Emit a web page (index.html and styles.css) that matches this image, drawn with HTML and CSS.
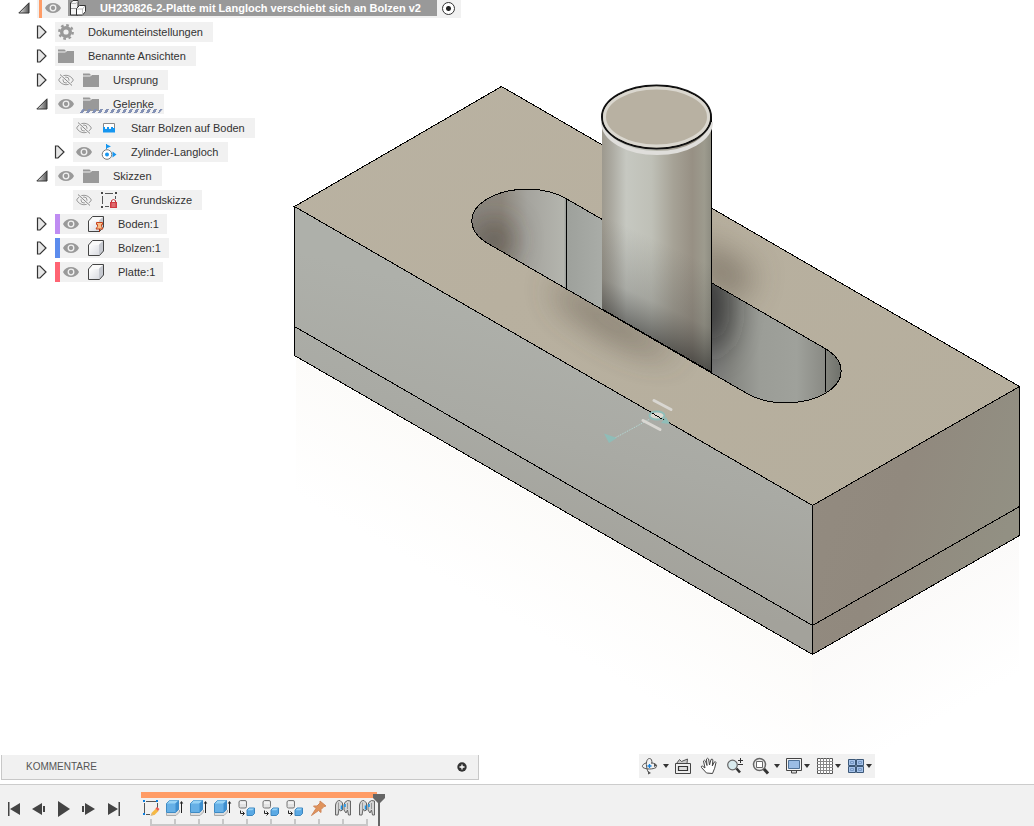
FILE: index.html
```html
<!DOCTYPE html>
<html lang="de">
<head>
    <meta charset="UTF-8">
    <meta name="viewport" content="width=device-width, initial-scale=1.0">
    <title>UH230826-2-Platte mit Langloch verschiebt sich an Bolzen v2</title>
    <link rel="stylesheet" href="styles.css">
</head>
<body>
    <!-- Symbole -->
    <svg class="defs" width="0" height="0">
        <symbol id="open" viewBox="0 0 12 12">
            <path d="M11 .8V11H.8z" fill="url(#tri)" stroke="#333"/>
        </symbol>
        <symbol id="closed" viewBox="0 0 12 14">
            <path d="M1.500 1h2.500L10 7l-6 6H1.500z" fill="#e6e6e6" stroke="#333" stroke-width="1.200"/>
        </symbol>
        <symbol id="eye" viewBox="0 0 16 12">
            <path d="M0 6C3-.8 13-.8 16 6 13 12.800 3 12.800 0 6z" fill="#999"/>
            <circle cx="8" cy="6" r="2.800" fill="#999" stroke="#f1f1f1" stroke-width="1.300"/>
        </symbol>
        <symbol id="eye-off" viewBox="0 0 16 12">
            <path d="M.6 6C4-.3 12-.3 15.400 6 12 12.300 4 12.300.6 6z" fill="none" stroke="#999"/>
            <circle cx="8" cy="6" r="3" fill="none" stroke="#999"/>
            <path d="M2 .5l12 11" stroke="#f1f1f1" stroke-width="2.500"/>
            <path d="M2 .5l12 11" stroke="#888"/>
        </symbol>
        <symbol id="folder" viewBox="0 0 18 14">
            <path d="M1 .5h6.500l1.500 1.500H17v12H1z" fill="#999"/>
            <path d="M1 3h7.500l1.500-1.500" fill="none" stroke="#f1f1f1"/>
        </symbol>
        <symbol id="body" viewBox="0 0 18 18">
            <path d="M1.500 5.500l3.500-4h11.500v11l-4 4h-11z" fill="#fafafa"/>
            <path d="M12 5.500l4.500-4v11l-4.500 4z" fill="#c6c9d0"/>
            <path d="M2 6h10v10H2z" fill="url(#cube)"/>
            <path d="M1.500 6L5.500 1.500h11V12l-4 4.500h-11z" fill="none" stroke="#444" stroke-width="1"/>
        </symbol>
        <symbol id="extrude" viewBox="0 0 18 18">
            <path d="M.5 14v2.500h9.500l3.500-3.500v-2" fill="#ddd" stroke="#aaa"/>
            <path d="M.5 4.500L3.500 1.500h9v9l-3 3h-9z" fill="#66b0e6" stroke="#3f8bc4"/>
            <path d="M1 4.500L3.700 1.500h8.500L9.500 4.500z" fill="#98d3f5"/>
            <path d="M9.500 4.500l3-3v9l-3 3z" fill="#3e8fcf"/>
            <path d="M15.500 14V4" stroke="#222"/>
            <path d="M13.700 4.500L15.500 2l1.800 2.500z" fill="#222"/>
        </symbol>
        <symbol id="component" viewBox="0 0 18 18">
            <path d="M1 3q.5-1.500 1.500-1.500h4.500q1.500 0 1.500 1.500v4.500q0 1.500-1.500 1.500h-4.500Q1 9 1 7.500z" fill="#e3e3e3" stroke="#777"/>
            <path d="M2 4h5.500" stroke="#fff"/>
            <path d="M2.500 11.500v3h3.500M4.500 12.500l2 2-2 2" fill="none" stroke="#222"/>
            <path d="M9 11l2-2h5.500v5.500l-2 2H9z" fill="#5aa9e4" stroke="#3c86bf"/>
            <path d="M9.500 11.200l1.700-1.700h4.800l-1.700 1.700z" fill="#98d3f5"/>
        </symbol>
        <symbol id="joint" viewBox="0 0 18 18">
            <path d="M1.500 16V6Q2.500 1 6 1.500L8.500 4v7l-2 1-1.500-2-1 6z" fill="#d6d6d6" stroke="#666"/>
            <path d="M16.500 16V2l-3-.5Q10 3 10 6v5l2 3 1.500-3 1 5z" fill="#d6d6d6" stroke="#666"/>
            <path d="M4.500 3.500v7M13.500 4v6" stroke="#999"/>
            <path d="M7.500 6.500v4M11 5v3" stroke="#1696f0" stroke-width="1.500"/>
        </symbol>
        <symbol id="caret" viewBox="0 0 6 4"><path d="M0 0h6L3 4z" fill="#333"/></symbol>
        <defs>
            <linearGradient id="tri"><stop stop-color="#eee"/><stop offset="1" stop-color="#555"/></linearGradient>
            <linearGradient id="cube" x2="1" y2="1"><stop stop-color="#fff"/><stop offset="1" stop-color="#d9dbe1"/></linearGradient>
        </defs>
    </svg>

    <main class="workspace">
        <svg class="model" viewBox="0 0 1034 784" role="img" aria-label="Platte mit Langloch und Bolzen">
            <defs>
                <linearGradient id="top" x1="0" y1="0" x2="1" y2="1">
                    <stop stop-color="#b9b2a2"/><stop offset=".4" stop-color="#b8b09f"/><stop offset="1" stop-color="#b5ae9d"/>
                </linearGradient>
                <linearGradient id="front" gradientUnits="userSpaceOnUse" x1="600" y1="330" x2="540" y2="560">
                    <stop stop-color="#aeb0aa"/><stop offset=".5" stop-color="#a9aaa4"/><stop offset="1" stop-color="#a3a29b"/>
                </linearGradient>
                <linearGradient id="side" x1="0" y1="0" x2="1" y2=".4">
                    <stop stop-color="#938b80"/><stop offset=".5" stop-color="#91897e"/><stop offset="1" stop-color="#929083"/>
                </linearGradient>
                <linearGradient id="cyl">
                    <stop stop-color="#9d998e"/><stop offset=".08" stop-color="#aaa89f"/>
                    <stop offset=".22" stop-color="#c6c8c1"/><stop offset=".45" stop-color="#bfc0b7"/>
                    <stop offset=".65" stop-color="#a6a296"/><stop offset=".82" stop-color="#979084"/>
                    <stop offset=".93" stop-color="#9d9b8e"/><stop offset="1" stop-color="#8c8b80"/>
                </linearGradient>
                <linearGradient id="cylShade" gradientUnits="userSpaceOnUse" x1="690" y1="255" x2="650" y2="342">
                    <stop stop-color="#333" stop-opacity="0"/><stop offset=".6" stop-color="#333" stop-opacity=".2"/><stop offset="1" stop-color="#222" stop-opacity=".6"/>
                </linearGradient>
                <linearGradient id="hole" gradientUnits="userSpaceOnUse" x1="472" y1="0" x2="841" y2="0">
                    <stop stop-color="#8b8780"/><stop offset=".08" stop-color="#8f897f"/>
                    <stop offset=".15" stop-color="#a5a49e"/><stop offset=".25" stop-color="#b4b5ae"/>
                    <stop offset=".252" stop-color="#9da09b"/><stop offset=".35" stop-color="#a9aca7"/>
                    <stop offset=".64" stop-color="#777"/><stop offset=".7" stop-color="#858681"/>
                    <stop offset=".78" stop-color="#9b9d97"/><stop offset=".88" stop-color="#9fa19b"/>
                    <stop offset=".955" stop-color="#8a8b85"/><stop offset=".957" stop-color="#85867f"/><stop offset="1" stop-color="#6f716b"/>
                </linearGradient>
                <linearGradient id="floorLeft" gradientUnits="userSpaceOnUse" x1="553" y1="505" x2="493" y2="609">
                    <stop stop-color="#fcfbf9"/><stop offset="1" stop-color="#fff"/>
                </linearGradient>
                <linearGradient id="floorRight" gradientUnits="userSpaceOnUse" x1="916" y1="595" x2="976" y2="699">
                    <stop stop-color="#fbfaf9"/><stop offset="1" stop-color="#fff"/>
                </linearGradient>
                <filter id="soft" filterUnits="userSpaceOnUse" x="0" y="0" width="1034" height="784"><feGaussianBlur stdDeviation="16"/></filter>
                <clipPath id="topClip"><path d="M501.500 86.500L294.500 206.500 812.500 505.500 1019.500 386.500z"/></clipPath>
                <clipPath id="holeClip"><path d="M566 198.500L825 348.500A54.500 31.500 0 0 1 747 393.500L488 243.500A54.500 31.500 0 0 1 566 198.500z"/></clipPath>
            </defs>

            <path d="M296 355L812 654V784H760L296 510z" fill="url(#floorLeft)"/>
            <path d="M812 654L1019 535V684L846 784H812z" fill="url(#floorRight)"/>

            <!-- Platte und Boden -->
            <path d="M501.500 86.500L294.500 206.500 812.500 505.500 1019.500 386.500z" fill="url(#top)"/>
            <path d="M294.500 206.500V355.500L812.500 654.500V505.500z" fill="url(#front)"/>
            <path d="M812.500 505.500V654.500L1019.500 535.500V386.500z" fill="url(#side)"/>
            <g clip-path="url(#topClip)" fill="#574e42">
                <path d="M550 280L680 355 650 352 610 335 565 305z" opacity=".8" filter="url(#soft)"/>
                <path d="M695 235L755 270 740 305 695 280z" opacity=".5" filter="url(#soft)"/>
            </g>
            <g class="edge">
                <path d="M501.500 86.500L294.500 206.500 812.500 505.500 1019.500 386.500z"/>
                <path d="M294.500 206.500V355.500L812.500 654.500 1019.500 535.500V386.500M812.500 505.500V654.500"/>
                <path d="M294.500 326.500L812.500 625.500 1019.500 506.500"/>
            </g>

            <!-- Langloch -->
            <path d="M566 198.500L825 348.500A54.500 31.500 0 0 1 747 393.500L488 243.500A54.500 31.500 0 0 1 566 198.500z" fill="url(#hole)"/>
            <g clip-path="url(#holeClip)">
                <ellipse cx="494" cy="240" rx="18" ry="18" fill="#3a3029" opacity=".7" filter="url(#soft)"/>
                <ellipse cx="710" cy="305" rx="20" ry="48" fill="#1c1c1c" opacity=".75" filter="url(#soft)"/>
            </g>
            <g class="edge">
                <path d="M566 198.500L825 348.500A54.500 31.500 0 0 1 747 393.500L488 243.500A54.500 31.500 0 0 1 566 198.500z"/>
                <path d="M566.500 198V288M825.500 349V392"/>
            </g>

            <!-- Bolzen -->
            <path d="M602 117V309L712 372V117z" fill="url(#cyl)"/>
            <path d="M602 117V309L712 372V117z" fill="url(#cylShade)"/>
            <path class="edge" d="M711.500 117V372M602 309L712 372.500"/>
            <path d="M603 122A54 31 0 0 0 711 122" fill="none" stroke="#dfdedb" stroke-width="4"/>
            <ellipse cx="656.500" cy="117" rx="54.500" ry="31.500" fill="#b8b1a2" stroke="#111" stroke-width="2"/>
            <ellipse cx="656.500" cy="117" rx="52" ry="29" fill="none" stroke="#dad7cf" stroke-width="3"/>

            <!-- Gelenkmarke -->
            <path d="M613 439L650 419" stroke="#b5dedb" stroke-dasharray="1 1"/>
            <path d="M604 433.500L617 438l-8 5zM666 417l4 7-9-1z" fill="#8fbdb8"/>
            <ellipse cx="657" cy="415.500" rx="7.500" ry="4" fill="#ddd9d0" stroke="#8fbdb8" stroke-width="2"/>
            <path d="M654 400.500l17 9M643 420.500l17 9" stroke="#d9d7d2" stroke-width="3" stroke-linecap="round"/>
            <path d="M652 413l10 6" class="edge"/>
        </svg>

        <nav class="browser" aria-label="Browser">
            <ul class="tree">
                <li>
                    <div class="row">
                        <button class="twisty" aria-label="Zuklappen"><svg width="12" height="12"><use href="#open"/></svg></button>
                        <div class="chip root">
                            <span class="stripe orange"></span>
                            <button class="slot" aria-label="Sichtbarkeit"><svg width="16" height="12"><use href="#eye"/></svg></button>
                            <div class="title">
                                <span class="slot"><svg width="18" height="18" viewBox="0 0 18 18">
                                    <path d="M1.500 4l2.500-2.500h5V7v9H1.500z" fill="#f4f4f4" stroke="#333"/>
                                    <path d="M2 4.500h5l2-2.500" fill="none" stroke="#bbb"/>
                                    <path d="M2 9.500h6" stroke="#999"/>
                                    <path d="M7.500 9.500L10.500 6.500H16.500v6L13.500 16H7.500z" fill="#fff" stroke="#333"/>
                                    <path d="M8 10h5.500l2.500-3M13.500 10v5.500" fill="none" stroke="#bbb"/>
                                </svg></span>
                                <span class="label">UH230826-2-Platte mit Langloch verschiebt sich an Bolzen v2</span>
                            </div>
                            <label class="activate"><input type="radio" name="active" aria-label="Komponente aktivieren" checked></label>
                        </div>
                    </div>
                    <ul>
                        <li><div class="row">
                            <button class="twisty" aria-label="Aufklappen"><svg width="12" height="14"><use href="#closed"/></svg></button>
                            <div class="chip">
                                <span class="slot"><svg width="16" height="16" viewBox="0 0 16 16">
                                    <circle cx="8" cy="8" r="4.300" fill="none" stroke="#999" stroke-width="3.400"/>
                                    <circle cx="8" cy="8" r="6.700" fill="none" stroke="#999" stroke-width="2.400" stroke-dasharray="2.630 2.630"/>
                                </svg></span>
                                <span class="label">Dokumenteinstellungen</span>
                            </div>
                        </div></li>
                        <li><div class="row">
                            <button class="twisty" aria-label="Aufklappen"><svg width="12" height="14"><use href="#closed"/></svg></button>
                            <div class="chip">
                                <span class="slot"><svg width="18" height="14"><use href="#folder"/></svg></span>
                                <span class="label">Benannte Ansichten</span>
                            </div>
                        </div></li>
                        <li><div class="row">
                            <button class="twisty" aria-label="Aufklappen"><svg width="12" height="14"><use href="#closed"/></svg></button>
                            <div class="chip">
                                <button class="slot" aria-label="Sichtbarkeit"><svg width="16" height="12"><use href="#eye-off"/></svg></button>
                                <span class="slot"><svg width="18" height="14"><use href="#folder"/></svg></span>
                                <span class="label">Ursprung</span>
                            </div>
                        </div></li>
                        <li>
                            <div class="row">
                                <button class="twisty" aria-label="Zuklappen"><svg width="12" height="12"><use href="#open"/></svg></button>
                                <div class="chip warn">
                                    <button class="slot" aria-label="Sichtbarkeit"><svg width="16" height="12"><use href="#eye"/></svg></button>
                                    <span class="slot"><svg width="18" height="14"><use href="#folder"/></svg></span>
                                    <span class="label">Gelenke</span>
                                </div>
                            </div>
                            <ul>
                                <li><div class="row">
                                    <span class="twisty"></span>
                                    <div class="chip">
                                        <button class="slot" aria-label="Sichtbarkeit"><svg width="16" height="12"><use href="#eye-off"/></svg></button>
                                        <span class="slot"><svg width="12" height="10" viewBox="0 0 12 10">
                                            <path d="M.5 5V.5h11V5" fill="#fff" stroke="#888"/>
                                            <path d="M0 4h2v2h2V4h2v2h2V4h2v1h2v4.500H0z" fill="#1696f0"/>
                                        </svg></span>
                                        <span class="label">Starr Bolzen auf Boden</span>
                                    </div>
                                </div></li>
                                <li><div class="row">
                                    <button class="twisty" aria-label="Aufklappen"><svg width="12" height="14"><use href="#closed"/></svg></button>
                                    <div class="chip">
                                        <button class="slot" aria-label="Sichtbarkeit"><svg width="16" height="12"><use href="#eye"/></svg></button>
                                        <span class="slot"><svg width="16" height="18" viewBox="0 0 16 18">
                                            <circle cx="6" cy="11.500" r="4.800" fill="#fff" stroke="#777"/>
                                            <circle cx="6" cy="11.500" r="2" fill="#1696f0"/>
                                            <path d="M5.500 1v5" stroke="#1696f0"/>
                                            <path d="M5 1l5 2.500L5 5.500zM11.500 8.500l4 3-4 3z" fill="#1696f0"/>
                                        </svg></span>
                                        <span class="label">Zylinder-Langloch</span>
                                    </div>
                                </div></li>
                            </ul>
                        </li>
                        <li>
                            <div class="row">
                                <button class="twisty" aria-label="Zuklappen"><svg width="12" height="12"><use href="#open"/></svg></button>
                                <div class="chip">
                                    <button class="slot" aria-label="Sichtbarkeit"><svg width="16" height="12"><use href="#eye"/></svg></button>
                                    <span class="slot"><svg width="18" height="14"><use href="#folder"/></svg></span>
                                    <span class="label">Skizzen</span>
                                </div>
                            </div>
                            <ul>
                                <li><div class="row">
                                    <span class="twisty"></span>
                                    <div class="chip">
                                        <button class="slot" aria-label="Sichtbarkeit"><svg width="16" height="12"><use href="#eye-off"/></svg></button>
                                        <span class="slot"><svg width="16" height="16" viewBox="0 0 16 16">
                                            <path d="M4 1.500h8M1.500 4v8M4 14.500h4M14.500 4v3" stroke="#555"/>
                                            <path d="M0 0h2v2H0zM14 0h2v2h-2zM0 14h2v2H0z" fill="#444"/>
                                            <path d="M10.500 10V8.500q2-2 4 0V10" fill="none" stroke="#c22f35"/>
                                            <path d="M9 10h7v6H9z" fill="#cf3a40"/>
                                            <path d="M10.500 12h4M10.500 14h4" stroke="#ee9a9d"/>
                                        </svg></span>
                                        <span class="label">Grundskizze</span>
                                    </div>
                                </div></li>
                            </ul>
                        </li>
                        <li><div class="row">
                            <button class="twisty" aria-label="Aufklappen"><svg width="12" height="14"><use href="#closed"/></svg></button>
                            <div class="chip part">
                                <span class="stripe purple"></span>
                                <button class="slot" aria-label="Sichtbarkeit"><svg width="16" height="12"><use href="#eye"/></svg></button>
                                <span class="slot"><svg width="18" height="18" viewBox="0 0 18 18">
                                    <use href="#body" width="18" height="18"/>
                                    <path d="M9.500 7.500h6v2h-1v2l1.500 2.500h-7l1.500-2.500v-2h-1z" fill="#f9c08a" stroke="#c8421c"/>
                                    <path d="M12.500 14v3" stroke="#a33516"/>
                                </svg></span>
                                <span class="label">Boden:1</span>
                            </div>
                        </div></li>
                        <li><div class="row">
                            <button class="twisty" aria-label="Aufklappen"><svg width="12" height="14"><use href="#closed"/></svg></button>
                            <div class="chip part">
                                <span class="stripe blue"></span>
                                <button class="slot" aria-label="Sichtbarkeit"><svg width="16" height="12"><use href="#eye"/></svg></button>
                                <span class="slot"><svg width="18" height="18"><use href="#body"/></svg></span>
                                <span class="label">Bolzen:1</span>
                            </div>
                        </div></li>
                        <li><div class="row">
                            <button class="twisty" aria-label="Aufklappen"><svg width="12" height="14"><use href="#closed"/></svg></button>
                            <div class="chip part">
                                <span class="stripe red"></span>
                                <button class="slot" aria-label="Sichtbarkeit"><svg width="16" height="12"><use href="#eye"/></svg></button>
                                <span class="slot"><svg width="18" height="18"><use href="#body"/></svg></span>
                                <span class="label">Platte:1</span>
                            </div>
                        </div></li>
                    </ul>
                </li>
            </ul>
        </nav>

        <div class="bottom">
            <section class="comments">
                <h2>KOMMENTARE</h2>
                <button aria-label="Kommentar hinzufügen"><svg width="10" height="10" viewBox="0 0 10 10">
                    <circle cx="5" cy="5" r="4.700" fill="#333"/><path d="M5 2.500v5M2.500 5h5" stroke="#fff" stroke-width="1.300"/>
                </svg></button>
            </section>
            <div class="nav-wrap">
                <div class="navbar" role="toolbar" aria-label="Navigation">
                    <button class="drop" aria-label="Orbit">
                        <svg width="18" height="18" viewBox="0 0 18 18">
                            <path d="M5 6C2 7 .5 9 2 10.500 5 12.500 12 12.500 15 10.500 17 8 14 6 10 6" fill="none" stroke="#555"/>
                            <path d="M8.500 1.500C6 1.500 5 5 5.500 9s1.500 6.500 3 7M8.500 1.500c2 0 2.500 2 2.500 5" fill="none" stroke="#555"/>
                            <path d="M7 14l3 2-3 1.500zM13 6l3 2.500-3 1.500z" fill="#555"/>
                            <path d="M8.500 7v4M6.500 9h4" stroke="#1681dc" stroke-width="1.300"/>
                        </svg>
                        <svg class="caret" width="6" height="4"><use href="#caret"/></svg>
                    </button>
                    <button aria-label="Ansehen">
                        <svg width="18" height="18" viewBox="0 0 18 18">
                            <path d="M2.500 6.500l3-4 2 2 6-2.500-.5 4.500" fill="#ccc" stroke="#555"/>
                            <path d="M1.500 6.500h15v10h-15z" fill="#eee" stroke="#444"/>
                            <path d="M4.500 9.500h9v4h-9z" fill="#ddd" stroke="#333" stroke-width="1.200"/>
                        </svg>
                    </button>
                    <button aria-label="Pan">
                        <svg width="18" height="18" viewBox="0 0 18 18">
                            <path d="M6.500 16L1.500 10.500Q.8 9 2.300 9l2.700 2L3.500 4Q4.300 2.500 5.500 4L7 8.500 6.500 2Q7.500.5 8.600 2L9.500 8 11 2.500q1.300-1 1.900.3L12.300 9l2-4q1.300-.8 1.700.5-1 6-3.500 11z" fill="#fff" stroke="#444"/>
                        </svg>
                    </button>
                    <button aria-label="Zoom">
                        <svg width="18" height="18" viewBox="0 0 18 18">
                            <circle cx="6.500" cy="8" r="4.800" fill="#d9ebee" stroke="#666" stroke-width="1.200"/>
                            <path d="M10.500 11.500L14 15.500" stroke="#333" stroke-width="2.600"/>
                            <path d="M14.500 1v5M12 3.500h5M12 7.500h5" stroke="#333"/>
                        </svg>
                    </button>
                    <button class="drop" aria-label="Einpassen">
                        <svg width="18" height="18" viewBox="0 0 18 18">
                            <circle cx="7.500" cy="7.500" r="6" fill="#eee" stroke="#666" stroke-width="1.500"/>
                            <path d="M4.500 4.500h6v6h-6z" fill="#fff" stroke="#666"/>
                            <path d="M12 12l4 4.500" stroke="#333" stroke-width="3"/>
                        </svg>
                        <svg class="caret" width="6" height="4"><use href="#caret"/></svg>
                    </button>
                    <button class="drop tight" aria-label="Anzeigeeinstellungen">
                        <svg width="18" height="18" viewBox="0 0 18 18">
                            <path d="M1.500 1.500h15v12h-15z" fill="#f4f4f4" stroke="#444"/>
                            <path d="M3.500 3.500h11v8h-11z" fill="#9bbde5" stroke="#4f7299"/>
                            <path d="M6.500 14v2h5v-2" fill="#ddd" stroke="#444"/>
                        </svg>
                        <svg class="caret" width="6" height="4"><use href="#caret"/></svg>
                    </button>
                    <button class="drop tight" aria-label="Raster">
                        <svg width="18" height="18" viewBox="0 0 18 18">
                            <path d="M1.500 1.500h15v15h-15z" fill="#fff" stroke="#555"/>
                            <path d="M4.500 1v16M7.500 1v16M10.500 1v16M13.500 1v16M1 4.500h16M1 7.500h16M1 10.500h16M1 13.500h16" stroke="#888"/>
                        </svg>
                        <svg class="caret" width="6" height="4"><use href="#caret"/></svg>
                    </button>
                    <button class="drop tight" aria-label="Ansichtsfenster">
                        <svg width="18" height="18" viewBox="0 0 18 18">
                            <path d="M1.500 2.500h7v6h-7zM9.500 2.500h7v6h-7zM1.500 9.500h7v6h-7zM9.500 9.500h7v6h-7z" fill="#a6c3ea" stroke="#3c5878"/>
                            <path d="M3.500 4.500h3v2h-3zM11.500 4.500h3v2h-3zM3.500 11.500h3v2h-3zM11.500 11.500h3v2h-3z" fill="none" stroke="#7798c4"/>
                        </svg>
                        <svg class="caret" width="6" height="4"><use href="#caret"/></svg>
                    </button>
                </div>
            </div>
        </div>
    </main>

    <footer class="timeline">
        <div class="player">
            <button aria-label="Zum Anfang"><svg width="16" height="16" viewBox="0 0 16 16"><path d="M2 1h1.500v14H2zM14 2v12L4 8z" fill="#444"/></svg></button>
            <button aria-label="Schritt zurück"><svg width="16" height="16" viewBox="0 0 16 16"><path d="M11 2v12L1 8zM12 5h2v6h-2z" fill="#444"/></svg></button>
            <button aria-label="Abspielen"><svg width="16" height="16" viewBox="0 0 16 16"><path d="M2 0v16l12-8z" fill="#444"/></svg></button>
            <button aria-label="Schritt vor"><svg width="16" height="16" viewBox="0 0 16 16"><path d="M4 2v12l10-6zM1 5h2v6H1z" fill="#444"/></svg></button>
            <button aria-label="Zum Ende"><svg width="16" height="16" viewBox="0 0 16 16"><path d="M2 2v12l10-6zM12.500 1H14v14h-1.500z" fill="#444"/></svg></button>
        </div>
        <div class="history">
            <div class="track"></div>
            <ol class="features">
                <li><button aria-label="Skizze"><svg width="18" height="18" viewBox="0 0 18 18">
                    <path d="M4 2.500h10M2.500 4v10M4 15.500h4M15.500 4v5" stroke="#555"/>
                    <path d="M1 1h2v2H1zM14 1h2v2h-2zM1 14h2v2H1z" fill="#0c7fe0"/>
                    <path d="M9 16.500l1-3 4-4 2.500 2.500-4 4z" fill="#f5b944"/><path d="M8.500 17l1-3 2 2z" fill="#d8b88a"/>
                    <path d="M13.500 9.500l1.500-1.500 2.500 2-1.500 2z" fill="#ee5a56"/>
                </svg></button></li>
                <li><button aria-label="Extrusion"><svg width="18" height="18"><use href="#extrude"/></svg></button></li>
                <li><button aria-label="Extrusion"><svg width="18" height="18"><use href="#extrude"/></svg></button></li>
                <li><button aria-label="Extrusion"><svg width="18" height="18"><use href="#extrude"/></svg></button></li>
                <li><button aria-label="Komponente"><svg width="18" height="18"><use href="#component"/></svg></button></li>
                <li><button aria-label="Komponente"><svg width="18" height="18"><use href="#component"/></svg></button></li>
                <li><button aria-label="Komponente"><svg width="18" height="18"><use href="#component"/></svg></button></li>
                <li><button aria-label="Fixieren"><svg width="18" height="18" viewBox="0 0 18 18">
                    <path d="M10 2l6 5-2 .5-3 3v3L8.500 11.500 1.500 16.500 6 9.500 3.500 7h3.500l3-3z" fill="#e0935c" stroke="#d0875a"/>
                </svg></button></li>
                <li><button aria-label="Gelenk"><svg width="18" height="18"><use href="#joint"/></svg></button></li>
                <li><button aria-label="Gelenk"><svg width="18" height="18"><use href="#joint"/></svg></button></li>
            </ol>
            <svg class="marker" width="12" height="34" viewBox="0 0 12 34"><path d="M0 0h12v4L7 9v25H5V9L0 4z" fill="#666"/></svg>
        </div>
    </footer>
</body>
</html>
```

FILE: styles.css
```css
* {
    box-sizing: border-box;
    margin: 0;
    padding: 0;
}

body {
    display: flex;
    flex-direction: column;
    min-height: 100vh;
    font-family: "Liberation Sans", Arial, sans-serif;
    font-size: 11px;
    line-height: 20px;
    color: #333;
    background-color: #fff;
    overflow: hidden;
}

ul, ol {
    list-style: none;
}

button {
    border: none;
    background: none;
    font: inherit;
    color: inherit;
    cursor: pointer;
}

svg {
    display: block;
    flex: none;
}

.defs {
    position: absolute;
}

.workspace {
    position: relative;
    flex: 1;
    display: flex;
    flex-direction: column;
    justify-content: space-between;
}

/* 3D-Ansicht liegt hinter Browser und Leisten */
.model {
    position: absolute;
    inset: 0;
    width: 100%;
    height: 100%;
}

.edge {
    fill: none;
    stroke: #000;
    stroke-width: 1;
    shape-rendering: crispEdges;
}

/* Browser */
.browser {
    position: relative;
    align-self: flex-start;
    margin-top: -4px;
    padding-left: 18px;
}

.tree ul {
    padding-left: 18px;
}

.row {
    display: flex;
    align-items: center;
    gap: 7px;
    height: 24px;
}

.twisty {
    display: flex;
    justify-content: center;
    width: 12px;
}

.chip {
    position: relative;
    display: flex;
    align-items: center;
    gap: 5px;
    height: 20px;
    padding: 0 10px 0 1px;
    background-color: #f1f1f1;
    white-space: nowrap;
}

.slot {
    display: flex;
    align-items: center;
    justify-content: center;
    width: 20px;
    height: 20px;
}

.label {
    padding-left: 7px;
}

.stripe {
    align-self: stretch;
    width: 5px;
    margin-right: -4px;
}

.part {
    padding: 0 8px 0 0;
}

.orange { background-color: #ff9c66; }
.purple { background-color: #bf8cf2; }
.blue { background-color: #5c8ced; }
.red { background-color: #ff6473; }

.root {
    padding: 0 6px 0 2px;
}

.root .stripe {
    width: 3px;
}

.title {
    display: flex;
    gap: 5px;
    height: 16px;
    align-items: center;
    padding-right: 16px;
    background-color: #999;
    color: #fff;
    font-weight: bold;
}

.activate {
    display: flex;
}

.activate input {
    appearance: none;
    width: 13px;
    height: 13px;
    border: 1px solid #333;
    border-radius: 50%;
    background: radial-gradient(circle, #222 0 2px, #fff 3px);
}

.warn::after {
    content: "";
    position: absolute;
    left: 26px;
    right: 3px;
    bottom: 1px;
    height: 4px;
    background: repeating-linear-gradient(90deg, #8391b5 0 3px, transparent 3px 6px);
    transform: skewX(-40deg);
}

/* untere Leisten */
.bottom {
    position: relative;
    display: flex;
    align-items: flex-start;
    padding: 0 0 4px 1px;
}

.comments {
    display: flex;
    align-items: center;
    justify-content: space-between;
    width: 478px;
    height: 25px;
    margin-top: 1px;
    padding: 0 11px 0 24px;
    border: 1px solid #c8c8c8;
    border-top: none;
    background-color: #f1f1f1;
}

.comments h2 {
    font-size: 10px;
    font-weight: normal;
    color: #555;
}

.nav-wrap {
    flex: 1;
    display: flex;
    justify-content: center;
}

.navbar {
    display: flex;
    align-items: center;
    gap: 8px;
    height: 24px;
    padding: 0 5px 0 2px;
    background-color: #f1f1f1;
}

.navbar button {
    display: flex;
    align-items: center;
}

.navbar .drop {
    gap: 4px;
    margin-right: -3px;
}

.navbar .tight {
    gap: 1px;
    margin-right: -2px;
}

/* Zeitachse */
.timeline {
    display: flex;
    height: 42px;
    border-top: 1px solid #ccc;
    background-color: #f1f1f1;
}

.player {
    display: flex;
    gap: 9px;
    align-items: center;
    height: 48px;
    padding-left: 6px;
}

.history {
    position: relative;
    margin-left: 19px;
    padding-top: 7px;
}

.track {
    height: 6px;
    margin-right: 4px;
    background-color: #ff9c66;
}

.features {
    display: flex;
    height: 28px;
}

.features li {
    position: relative;
    width: 24px;
    padding-top: 1px;
}

.features button {
    padding-left: 1px;
}

/* Verbindungslinie unter den Schritten */
.features li::before {
    content: "";
    position: absolute;
    left: 9px;
    top: 21px;
    width: 24px;
    height: 5px;
    border-left: 2px solid #c8c8c8;
    border-bottom: 2px solid #c8c8c8;
}

.features li:last-child::before {
    width: 0;
}

.marker {
    position: absolute;
    right: -4px;
    top: 9px;
}
```
